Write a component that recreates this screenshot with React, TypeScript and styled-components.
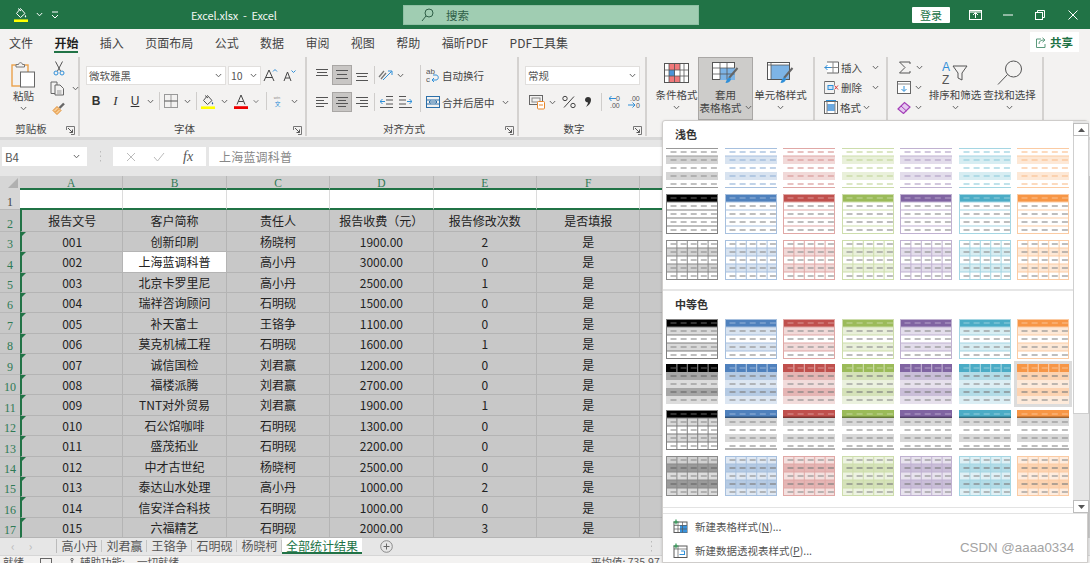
import React from "react";
import styled, { createGlobalStyle } from "styled-components";

const FONT = `"Noto Sans CJK SC", "Noto Sans", sans-serif`;
const GREEN = "#217346";

const Global = createGlobalStyle`
  html, body { margin: 0; padding: 0; background: #e6e6e6; }
  body { font-family: ${FONT}; }
  * { box-sizing: border-box; }
`;

const Page = styled.div`
  position: relative;
  width: 1090px;
  height: 563px;
  overflow: hidden;
  display: flex;
  flex-direction: column;
  background: #e6e6e6;
  color: #333;
`;

/* ---------- title bar ---------- */
const TitleBar = styled.header`
  flex: none;
  height: 29px;
  background: ${GREEN};
  display: flex;
  align-items: center;
  color: #fff;
`;
const Quick = styled.div`
  width: 191px;
  flex: none;
  display: flex;
  align-items: center;
  padding-left: 14px;
  gap: 8px;
`;
const FileName = styled.div`
  width: 212px;
  flex: none;
  font-size: 11px;
  letter-spacing: -0.1px;
  white-space: pre;
  color: #f2f7f4;
`;
const Search = styled.div`
  width: 296px;
  height: 20px;
  flex: none;
  background: #a0cdb2;
  border: 1px solid #8fc0a4;
  display: flex;
  align-items: center;
  padding-left: 17px;
  gap: 12px;
  font-size: 11.5px;
  color: #2f5f47;
`;
const SignIn = styled.div`
  flex: none;
  margin-left: 213px;
  width: 38px;
  height: 16px;
  background: #fff;
  border-radius: 1px;
  color: ${GREEN};
  font-size: 11px;
  line-height: 16px;
  text-align: center;
`;
const WinIcons = styled.div`
  flex: none;
  display: flex;
  align-items: center;
  margin-left: 9px;
`;
const WinSlot = styled.div`
  width: 32.6px;
  display: flex;
  justify-content: center;
`;

/* ---------- tabs ---------- */
const TabRow = styled.nav`
  flex: none;
  height: 28px;
  background: #f3f2f1;
  display: flex;
  align-items: center;
  padding-left: 9px;
  gap: 21.4px;
  position: relative;
`;
const Tab = styled.div<{ $on?: boolean }>`
  position: relative;
  font-size: 12px;
  height: 28px;
  line-height: 27px;
  color: ${(p) => (p.$on ? "#1f1f1f" : "#444")};
  font-weight: ${(p) => (p.$on ? 700 : 400)};
  white-space: nowrap;
  &::after {
    content: "";
    display: ${(p) => (p.$on ? "block" : "none")};
    position: absolute;
    left: 0;
    right: 0;
    top: 22px;
    height: 2px;
    background: ${GREEN};
  }
`;
const ShareButton = styled.div`
  position: absolute;
  left: 1030px;
  top: 3px;
  width: 49px;
  height: 20px;
  background: #fff;
  display: flex;
  align-items: center;
  justify-content: center;
  gap: 3px;
  font-size: 11.5px;
  font-weight: 700;
  color: ${GREEN};
`;

/* ---------- ribbon ---------- */
const Ribbon = styled.section`
  flex: none;
  height: 83px;
  background: #f3f2f1;
  border-bottom: 3px solid #d8d8d8;
  display: flex;
`;
const Group = styled.div<{ $w: number }>`
  flex: none;
  width: ${(p) => p.$w}px;
  height: 79px;
  display: flex;
  flex-direction: column;
  position: relative;
  border-right: 2px solid #d4d2d0;
`;
const Body = styled.div<{ $top?: number; $left?: number }>`
  height: 66px;
  display: flex;
  padding-top: ${(p) => p.$top ?? 0}px;
  padding-left: ${(p) => p.$left ?? 0}px;
`;
const GroupLabel = styled.div`
  height: 14px;
  line-height: 14px;
  font-size: 10.5px;
  color: #444;
  text-align: center;
  padding-right: 16px;
`;
const Launcher = styled.div`
  position: absolute;
  right: 3px;
  bottom: 1px;
  line-height: 0;
`;
const Stack = styled.div<{ $gap?: number }>`
  display: flex;
  flex-direction: column;
  gap: ${(p) => p.$gap ?? 0}px;
`;
const ToolRow = styled.div<{ $h?: number }>`
  display: flex;
  align-items: center;
  height: ${(p) => p.$h ?? 20}px;
  font-size: 10.5px;
  color: #444;
`;
const Slot = styled.div<{ $w: number; $on?: boolean }>`
  flex: none;
  width: ${(p) => p.$w}px;
  height: 20px;
  display: flex;
  align-items: center;
  justify-content: center;
  font-size: 12px;
  color: #333;
  background: ${(p) => (p.$on ? "#c8c6c4" : "transparent")};
  border: ${(p) => (p.$on ? "1px solid #a9a7a5" : "none")};
`;
const MiniSep = styled.div<{ $w: number; $tall?: boolean }>`
  flex: none;
  width: ${(p) => p.$w}px;
  height: ${(p) => (p.$tall ? 47 : 18)}px;
  position: relative;
  &::after {
    content: "";
    position: absolute;
    left: 50%;
    top: 0;
    bottom: 0;
    width: 1px;
    background: #cfcdcb;
  }
`;
const Combo = styled.div<{ $w: number }>`
  flex: none;
  width: ${(p) => p.$w}px;
  height: 19px;
  background: #fff;
  border: 1px solid #e1dfdd;
  display: flex;
  align-items: center;
  justify-content: space-between;
  padding: 0 3px 0 2px;
  font-size: 10.5px;
  color: #555;
`;
const Large = styled.div<{ $w: number; $on?: boolean; $ml?: number }>`
  flex: none;
  width: ${(p) => p.$w}px;
  height: 63px;
  margin-left: ${(p) => p.$ml ?? 0}px;
  display: flex;
  flex-direction: column;
  align-items: center;
  font-size: 10.5px;
  line-height: 13px;
  color: #444;
  white-space: nowrap;
  background: ${(p) => (p.$on ? "#cdccca" : "transparent")};
  border: ${(p) => (p.$on ? "1px solid #a9a7a5" : "1px solid transparent")};
`;
const LargeIcon = styled.div`
  height: 30px;
  flex: none;
  display: flex;
  align-items: center;
  justify-content: center;
`;
const LargeLine = styled.div`
  height: 13px;
  display: flex;
  align-items: center;
  gap: 3px;
`;
const Spaced = styled.span`
  margin-left: 2px;
  white-space: nowrap;
`;
const BoldGlyph = styled.b`
  font-family: "Liberation Sans", sans-serif;
`;
const ItalicGlyph = styled.i`
  font-family: "Liberation Serif", serif;
  font-size: 13px;
`;
const UnderGlyph = styled.u`
  font-family: "Liberation Sans", sans-serif;
`;

/* ---------- formula bar ---------- */
const FormulaRow = styled.div`
  flex: none;
  height: 36px;
  padding: 7px 0 0 2px;
  display: flex;
  background: #e6e6e6;
`;
const FormulaBox = styled.div<{ $w: number }>`
  flex: none;
  width: ${(p) => p.$w}px;
  height: 19px;
  background: #fff;
  display: flex;
  align-items: center;
  font-size: 11.5px;
  color: #555;
`;
const NameBox = styled(FormulaBox)`
  justify-content: space-between;
  padding: 0 7px 0 3px;
`;
const DotsSlot = styled.div`
  flex: none;
  width: 26px;
  height: 19px;
  display: flex;
  align-items: center;
  justify-content: center;
`;
const FxBox = styled(FormulaBox)`
  justify-content: space-around;
  padding: 0 4px;
  color: #bbb;
`;
const FxMark = styled.span`
  font-family: "Liberation Serif", serif;
  font-style: italic;
  font-size: 14px;
  color: #555;
`;
const FormulaInput = styled(FormulaBox)`
  margin-left: 3px;
  padding-left: 10px;
  font-size: 12px;
  color: #888;
  letter-spacing: 0.2px;
`;

/* ---------- sheet ---------- */
const Sheet = styled.main`
  flex: none;
  height: 362px;
  overflow: hidden;
  background: #c8c8c8;
`;
const SheetRow = styled.div<{ $h: number }>`
  display: flex;
  height: ${(p) => p.$h}px;
  width: 1200px;
`;
const Corner = styled.div`
  flex: none;
  width: 20px;
  background: #d6d6d6;
  position: relative;
  &::after {
    content: "";
    position: absolute;
    right: 2px;
    bottom: 2px;
    border-style: solid;
    border-width: 0 0 10px 10px;
    border-color: transparent transparent #b0b0b0 transparent;
  }
`;
const ColHead = styled.div`
  flex: 0 0 103.4px;
  background: #cfcfcf;
  border-right: 1px solid #b8b8b8;
  border-bottom: 2px solid ${GREEN};
  font-family: "Liberation Serif", serif;
  font-size: 11.5px;
  line-height: 14px;
  text-align: center;
  color: #2f7a55;
`;
const RowHead = styled.div<{ $plain?: boolean }>`
  flex: none;
  width: 20px;
  background: ${(p) => (p.$plain ? "#d6d6d6" : "#c8c8c8")};
  border-bottom: 1px solid #b8b8b8;
  font-family: "Liberation Serif", serif;
  font-size: 12px;
  text-align: center;
  display: flex;
  align-items: flex-end;
  justify-content: center;
  line-height: 14px;
  color: ${(p) => (p.$plain ? "#444" : "#2f7a55")};
`;
const Cell = styled.div<{ $first?: boolean; $tick?: boolean; $white?: boolean }>`
  position: relative;
  flex: 0 0 103.4px;
  display: flex;
  align-items: center;
  justify-content: center;
  font-size: 12px;
  color: #222;
  background: ${(p) => (p.$white ? "#fff" : "#c8c8c8")};
  border-right: 1px solid #b4b4b4;
  border-bottom: 1px solid #b4b4b4;
  border-left: ${(p) => (p.$first ? `2px solid ${GREEN}` : "none")};
  &::before {
    content: "";
    display: ${(p) => (p.$tick ? "block" : "none")};
    position: absolute;
    left: 0;
    top: 0;
    border-style: solid;
    border-width: 4px 4px 0 0;
    border-color: ${GREEN} transparent transparent transparent;
  }
`;
const BlankCell = styled.div`
  flex: 0 0 103.4px;
  background: #fff;
  border-right: 1px solid #dcdcdc;
  border-bottom: 2px solid ${GREEN};
`;

/* ---------- sheet tabs + status ---------- */
const TabBar = styled.div`
  flex: none;
  height: 17px;
  background: #e6e6e6;
  display: flex;
  position: relative;
`;
const Nav = styled.div`
  flex: none;
  width: 57px;
  display: flex;
  padding-left: 11px;
  gap: 14px;
  font-size: 12px;
  line-height: 14px;
  color: #bbb;
  border-right: 1px solid #bbb;
  height: 14px;
  margin-top: 1px;
`;
const SheetTab = styled.div<{ $on?: boolean }>`
  flex: none;
  width: ${(p) => (p.$on ? 80 : 45)}px;
  height: 16px;
  text-align: center;
  font-size: 12px;
  line-height: 15px;
  color: ${(p) => (p.$on ? GREEN : "#555")};
  background: ${(p) => (p.$on ? "#fff" : "transparent")};
  border-bottom: ${(p) => (p.$on ? `2px solid ${GREEN}` : "none")};
  position: relative;
  &::after {
    content: "";
    display: ${(p) => (p.$on ? "none" : "block")};
    position: absolute;
    right: 0;
    top: 2px;
    bottom: 2px;
    width: 1px;
    background: #c4c4c4;
  }
`;
const PlusSlot = styled.div`
  flex: none;
  margin-left: 18px;
  margin-top: 2px;
  line-height: 0;
`;
const GripSlot = styled.div`
  position: absolute;
  left: 650px;
  top: 3px;
  line-height: 0;
`;
const StatusBar = styled.footer`
  flex: none;
  height: 20px;
  background: #f3f2f1;
  display: flex;
  align-items: flex-start;
  font-size: 10.5px;
  line-height: 12px;
  color: #555;
  padding-left: 3px;
  border-top: 1px solid #d6d6d6;
  position: relative;
`;
const StatusItem = styled.span<{ $ml?: number }>`
  margin-left: ${(p) => p.$ml ?? 0}px;
  white-space: nowrap;
  line-height: 12px;
`;
const StatusGlyph = styled.span<{ $ml: number }>`
  margin-left: ${(p) => p.$ml}px;
  line-height: 0;
  padding-top: 2px;
`;

/* ---------- table styles menu ---------- */
const Menu = styled.aside`
  position: absolute;
  left: 662px;
  top: 120px;
  width: 426px;
  height: 443px;
  background: #fff;
  border: 1px solid #cfcdcb;
  border-radius: 3px 3px 0 0;
  box-shadow: 0 1px 3px rgba(0, 0, 0, 0.18);
  display: flex;
  flex-direction: column;
`;
const MenuTop = styled.div`
  flex: none;
  height: 393px;
  display: flex;
  border-bottom: 1px solid #e3e3e3;
`;
const GalleryPane = styled.div`
  flex: none;
  width: 410px;
  display: flex;
  flex-direction: column;
  padding-left: 3px;
`;
const SectionTitle = styled.div<{ $h: number }>`
  height: ${(p) => p.$h}px;
  padding: 0 0 2px 9px;
  display: flex;
  align-items: center;
  font-size: 11px;
  font-weight: 700;
  color: #333;
`;
const Gallery = styled.div`
  display: grid;
  grid-template-columns: repeat(7, 52px);
  column-gap: 6.53px;
  row-gap: 5.75px;
`;
const ThumbBox = styled.div<{ $hot?: boolean }>`
  width: 52px;
  height: 40px;
  line-height: 0;
  outline: ${(p) => (p.$hot ? "3px solid #dcdcdc" : "none")};
  background: ${(p) => (p.$hot ? "#dcdcdc" : "transparent")};
`;
const SectionRule = styled.div`
  height: 2px;
  margin: 9px 0 0 -3px;
  background: #e6e6e6;
`;
const GalleryEnd = styled.div`
  height: 1px;
  margin: auto 0 5px -3px;
  background: #e3e3e3;
`;
const Scroller = styled.div`
  flex: none;
  width: 16px;
  display: flex;
  flex-direction: column;
  background: #e6e6e6;
  padding-top: 2px;
`;
const ScrollBtn = styled.div`
  height: 13px;
  flex: none;
  background: #fff;
  border: 1px solid #bdbdbd;
  display: flex;
  align-items: center;
  justify-content: center;
`;
const ScrollThumb = styled.div`
  height: 278px;
  flex: none;
  background: #fff;
  border: 1px solid #cfcfcf;
  border-top: none;
`;
const ScrollTrack = styled.div`
  flex: 1;
`;
const MenuItem = styled.div`
  flex: none;
  height: 24px;
  display: flex;
  align-items: center;
  padding-left: 10px;
  gap: 7px;
  font-size: 10.5px;
  color: #555;
`;
const Mnemonic = styled.span`
  text-decoration: underline;
`;
const Watermark = styled.div`
  position: absolute;
  left: 960px;
  top: 540px;
  font-family: "Liberation Sans", sans-serif;
  font-size: 13.3px;
  line-height: 16px;
  color: #a3a3a3;
  white-space: nowrap;
`;

/* ---------- icons ---------- */
const G = "#555";
const BLUE = "#2f8fd8";
const Chev = ({ c = "#666" }: { c?: string }) => (
  <svg width="7" height="5" viewBox="0 0 7 5">
    <path d="M.8 1 3.5 3.8 6.2 1" fill="none" stroke={c} strokeWidth="1" />
  </svg>
);
const Lines = ({ rows }: { rows: [number, number, number][] }) => (
  <svg width="14" height="14" viewBox="0 0 14 14">
    {rows.map(([x, y, w], i) => (
      <rect key={i} x={x} y={y} width={w} height="1" fill={G} />
    ))}
  </svg>
);
const Launch = () => (
  <svg width="9" height="9" viewBox="0 0 9 9">
    <path d="M.5 4V.5H8.5V8.5H5" fill="none" stroke="#777" />
    <path d="M2 2 6.5 6.5M6.5 3.5V6.5H3.5" fill="none" stroke="#555" />
  </svg>
);
const Bucket = ({ w = "#fff", bar = "#ffff00", bx = 14 }: { w?: string; bar?: string; bx?: number }) => (
  <svg width={bx} height="15" viewBox="0 0 14 15">
    <path d="M6.5 1.5 11 6.5 6.5 10.5 2.5 6.5Z" fill="none" stroke={w} />
    <path d="M4 1.5 7 4" stroke={w} />
    <path d="M11.5 8c.9 1.2 1 2.2 0 2.4-1-.2-.9-1.2 0-2.4Z" fill={w === "#fff" ? "#fff" : "#2b579a"} />
    <rect x="0" y="12.4" width="14" height="2.6" fill={bar} />
  </svg>
);
const Paste = () => (
  <svg width="25" height="27" viewBox="0 0 25 27">
    <rect x="1" y="4" width="16" height="21" fill="none" stroke="#eaa24b" strokeWidth="1.4" />
    <path d="M5 6V3.5H7.5C8 1 11 1 11.5 3.5H13.5V6Z" fill="#f3f2f1" stroke="#777" />
    <rect x="9.5" y="11" width="14" height="15" fill="#fff" stroke="#666" />
  </svg>
);
const Scissors = () => (
  <svg width="12" height="15" viewBox="0 0 12 15">
    <path d="M2.5 .5 7.5 10M9.5 .5 4.5 10" fill="none" stroke="#555" />
    <circle cx="3" cy="12" r="2" fill="none" stroke={BLUE} />
    <circle cx="9" cy="12" r="2" fill="none" stroke={BLUE} />
  </svg>
);
const CopyIcon = () => (
  <svg width="15" height="15" viewBox="0 0 15 15">
    <path d="M1 1H7V12.5H1Z" fill="none" stroke="#666" />
    <path d="M5 4H10L13.5 7.5V14H5Z" fill="#f3f2f1" stroke="#666" />
    <path d="M7 10H11.5M7 12H11.5" stroke="#999" />
  </svg>
);
const Brush = () => (
  <svg width="14" height="14" viewBox="0 0 14 14">
    <path d="M1 9.5 5 5.5 9 9.5 5 13.5Z" fill="#f7c98f" stroke="#e08a2b" />
    <path d="M3.5 11 6.5 8" stroke="#e08a2b" />
    <path d="M7.5 7 12 2.5" stroke="#666" strokeWidth="2.4" />
  </svg>
);
const BorderIcon = () => (
  <svg width="14" height="14" viewBox="0 0 14 14">
    <rect x=".5" y=".5" width="13" height="13" fill="none" stroke="#999" />
    <path d="M7 .5V13.5" stroke="#999" />
    <path d="M.5 7H13.5" stroke="#555" />
  </svg>
);
const FontColor = () => (
  <svg width="14" height="15" viewBox="0 0 14 15">
    <path d="M3 10.5 7 1l4 9.5M4.4 7.5h5.2" fill="none" stroke="#444" />
    <rect x="0" y="12.2" width="14" height="2.8" fill="#ee0000" />
  </svg>
);
const Orient = () => (
  <svg width="16" height="15" viewBox="0 0 16 15">
    <path d="M1 9 6 3M3 11l5-6" stroke="#777" fill="none" strokeWidth="1.3" />
    <path d="M5 12 13.5 3.5" stroke={BLUE} />
    <path d="M10 3H14V7" stroke={BLUE} fill="none" />
  </svg>
);
const Indent = ({ flip }: { flip?: boolean }) => (
  <svg width="13" height="12" viewBox="0 0 13 12">
    <g transform={flip ? "matrix(-1 0 0 1 13 0)" : undefined}>
      <path d="M6 .5H13M6 4H13M6 8H13M0 11.5H13" stroke={G} />
      <path d="M0 5.5H5M2.5 3 0 5.5 2.5 8" stroke={BLUE} fill="none" />
    </g>
  </svg>
);
const WrapIcon = () => (
  <svg width="14" height="16" viewBox="0 0 14 16">
    <text x="0" y="7" fontSize="8" fill="#555" fontFamily="Liberation Sans">ab</text>
    <text x="0" y="15" fontSize="8" fill="#555" fontFamily="Liberation Sans">c</text>
    <path d="M6 13h4c3 0 3-5 0-5H7M8 11l-2 2 2 2" stroke={BLUE} fill="none" />
  </svg>
);
const MergeIcon = () => (
  <svg width="14" height="14" viewBox="0 0 14 14">
    <rect x=".5" y="1.5" width="13" height="11" fill="none" stroke="#2b6fa8" />
    <path d="M.5 5H13.5M.5 9H13.5" stroke="#2b6fa8" />
    <rect x="3" y="6" width="8" height="2" fill="#f3f2f1" />
    <path d="M3 7h8M4.5 5.5 3 7l1.5 1.5M9.5 5.5 11 7 9.5 8.5" stroke="#2b6fa8" fill="none" />
  </svg>
);
const Accounting = () => (
  <svg width="17" height="16" viewBox="0 0 17 16">
    <rect x=".5" y="1.5" width="13" height="9" fill="none" stroke="#666" />
    <rect x="3" y="4" width="8" height="4" fill="none" stroke="#888" />
    <rect x="8.5" y="7.5" width="7" height="7.5" rx="1" fill="#fff" stroke="#e8862a" />
    <path d="M10 11H14" stroke="#e8862a" />
  </svg>
);
const Decimal = ({ more }: { more?: boolean }) => (
  <svg width="15" height="14" viewBox="0 0 15 14">
    <text x={more ? 2 : 7} y="6" fontSize="7" fill="#555" fontFamily="Liberation Sans">{more ? ".00" : "0"}</text>
    <text x={more ? 8 : 1} y="13" fontSize="7" fill="#555" fontFamily="Liberation Sans">{more ? "0" : ".00"}</text>
    {more ? (
      <path d="M0 10H7M4.5 7.5 7 10 4.5 12.5" stroke={BLUE} fill="none" />
    ) : (
      <path d="M7 3.5H0M2.5 1 0 3.5 2.5 6" stroke={BLUE} fill="none" />
    )}
  </svg>
);
const CondFormat = () => (
  <svg width="25" height="20" viewBox="0 0 25 20">
    <rect x=".5" y=".5" width="24" height="19" fill="#fff" stroke="#555" />
    <rect x="5" y="1" width="11" height="6" fill="#f0787a" />
    <rect x="5" y="7" width="6" height="6" fill="#4a94d8" />
    <rect x="5" y="13" width="11" height="6" fill="#f0787a" />
    <path d="M5 .5V19.5M10.5 .5V19.5M16 .5V19.5M20 .5V19.5M.5 7H24.5M.5 13H24.5" stroke="#555" strokeWidth=".8" fill="none" />
  </svg>
);
const TableFmt = () => (
  <svg width="27" height="23" viewBox="0 0 27 23">
    <rect x=".5" y=".5" width="22" height="17" fill="#fff" stroke="#555" />
    <rect x="8" y="6" width="15" height="12" fill="#7db4e6" />
    <path d="M8 .5V17.5M15 .5V17.5M.5 6H22.5M.5 12H22.5" stroke="#555" strokeWidth=".8" fill="none" />
    <path d="M17 16 25.5 6" stroke="#666" strokeWidth="2" />
    <path d="M13.5 21c1-3 2-5 4-5.500l1.500 1.500c-.5 2.500-2.500 4-5.500 4Z" fill="#2f8fd8" />
  </svg>
);
const CellFmt = () => (
  <svg width="27" height="23" viewBox="0 0 27 23">
    <rect x=".5" y=".5" width="22" height="17" fill="#fff" stroke="#555" />
    <rect x="4" y="3" width="18" height="14" fill="#7db4e6" />
    <path d="M4 .5V17.5M.5 3H22.5" stroke="#555" strokeWidth=".8" fill="none" />
    <path d="M17 16 25.5 6" stroke="#666" strokeWidth="2" />
    <path d="M13.5 21c1-3 2-5 4-5.500l1.500 1.500c-.5 2.500-2.500 4-5.500 4Z" fill="#2f8fd8" />
  </svg>
);
const InsertIcon = () => (
  <svg width="15" height="13" viewBox="0 0 15 13">
    <path d="M3 1H14.5V12H3" fill="#fff" stroke="#666" />
    <path d="M9 1V12M.5 6.5H14.5" stroke="#888" />
    <path d="M1 6.5H7M3.5 4 1 6.5 3.5 9" stroke={BLUE} fill="none" />
  </svg>
);
const DeleteIcon = () => (
  <svg width="15" height="13" viewBox="0 0 15 13">
    <path d="M.5 .5H10.5M.5 12.5H10.5" stroke="#666" />
    <rect x="4" y="4.5" width="5" height="4" fill="#cfe2f5" stroke={BLUE} />
    <path d="M10.5 4.5 14 8.5M14 4.5 10.5 8.5" stroke="#d83b3b" />
    <path d="M.5 .5V12.5M10.5 .5V4M10.5 9V12.5" stroke="#888" />
  </svg>
);
const FormatIcon = () => (
  <svg width="14" height="14" viewBox="0 0 14 14">
    <rect x=".5" y="1.5" width="13" height="12" fill="#fff" stroke="#666" />
    <rect x="3" y="4" width="8" height="7" fill="#6aa9e2" />
    <path d="M3 1.5V13.5M11 1.5V13.5" stroke="#888" />
    <path d="M2 .5H12" stroke={BLUE} />
  </svg>
);
const SigmaIcon = () => (
  <svg width="13" height="13" viewBox="0 0 13 13">
    <path d="M12 3V1H1.5L7 6.5 1.5 12H12V10" fill="none" stroke="#555" />
  </svg>
);
const FillIcon = () => (
  <svg width="14" height="13" viewBox="0 0 14 13">
    <rect x=".5" y=".5" width="13" height="12" fill="#fff" stroke="#666" />
    <path d="M.5 3H13.5" stroke="#888" />
    <path d="M7 5V10M4.5 8 7 10.5 9.5 8" stroke={BLUE} fill="none" />
  </svg>
);
const Eraser = () => (
  <svg width="14" height="13" viewBox="0 0 14 13">
    <path d="M1 8 7.5 1.5 13 6 6.5 12.5Z" fill="#e5c8f0" stroke="#a43fb8" strokeWidth="1.2" />
    <path d="M4 5 9.5 10" stroke="#a43fb8" strokeWidth="1" />
  </svg>
);
const SortIcon = () => (
  <svg width="26" height="26" viewBox="0 0 26 26">
    <text x="0" y="11" fontSize="12" fill={BLUE} fontFamily="Liberation Sans">A</text>
    <text x="0" y="24" fontSize="12" fill="#555" fontFamily="Liberation Sans">Z</text>
    <path d="M11 6H25L20 13V20L16 18V13Z" fill="none" stroke="#555" />
  </svg>
);
const FindIcon = () => (
  <svg width="26" height="26" viewBox="0 0 26 26">
    <circle cx="16.5" cy="9" r="8" fill="none" stroke="#555" />
    <path d="M10.5 14.5 1 24.5" stroke="#555" />
  </svg>
);
const MagIcon = () => (
  <svg width="13" height="14" viewBox="0 0 13 14">
    <circle cx="8" cy="5" r="4" fill="none" stroke="#2f5f47" />
    <path d="M5 8 1 13" stroke="#2f5f47" />
  </svg>
);
const ShareIcon = () => (
  <svg width="11" height="11" viewBox="0 0 11 11">
    <path d="M5 2H.5V10.5H9V7" fill="none" stroke="#5b9a7c" />
    <path d="M3 7C3 4 5 3 8 3M6.5 .8 9 3 6.5 5.2" fill="none" stroke="#5b9a7c" />
  </svg>
);
const WinBox = () => (
  <svg width="13" height="10" viewBox="0 0 13 10">
    <rect x=".5" y=".5" width="12" height="9" fill="none" stroke="#fff" />
    <path d="M6.5 8V3M4 5 6.5 2.5 9 5" fill="none" stroke="#fff" />
    <rect x="1" y="1" width="11" height="2" fill="#fff" opacity=".6" />
  </svg>
);
const PlusCircle = () => (
  <svg width="13" height="13" viewBox="0 0 13 13">
    <circle cx="6.5" cy="6.5" r="5.8" fill="none" stroke="#8a8a8a" />
    <path d="M3.5 6.5H9.5M6.5 3.5V9.5" stroke="#666" />
  </svg>
);
const Grip = () => (
  <svg width="3" height="11" viewBox="0 0 3 11">
    <path d="M1.5 0V1.500M1.5 4.500V6M1.5 9V10.500" stroke="#bbb" />
  </svg>
);
const A11y = () => (
  <svg width="10" height="10" viewBox="0 0 10 10">
    <circle cx="4" cy="1.5" r="1.2" fill="none" stroke="#666" />
    <path d="M4 3V6.500H7L8.500 9.500M1.500 6C1 8 2.500 9.500 4 9.500" fill="none" stroke="#666" />
  </svg>
);
const NormalView = () => (
  <svg width="12" height="9" viewBox="0 0 12 9">
    <rect x=".5" y=".5" width="11" height="8" fill="none" stroke="#666" />
  </svg>
);
const NewTable = () => (
  <svg width="15" height="14" viewBox="0 0 15 14">
    <rect x="1" y="3" width="13" height="10.500" fill="#fff" stroke="#5a5a5a" />
    <rect x="7" y="6" width="7" height="7.500" fill="#3a93dc" />
    <path d="M5 3V13.500M9.500 3V13.500M1 6.500H14M1 10H14" stroke="#5a5a5a" strokeWidth=".7" />
    <path d="M3 .5V5.500M.5 3H5.500" stroke="#2c9a53" strokeWidth="1.2" />
  </svg>
);
const NewPivot = () => (
  <svg width="15" height="15" viewBox="0 0 15 15">
    <rect x="1" y="3" width="13" height="11.500" fill="#fff" stroke="#5a5a5a" />
    <path d="M1 6H14M5 3V14.500" stroke="#5a5a5a" strokeWidth=".7" />
    <path d="M8 8H11.500V12M6.500 11.500H11.500" fill="none" stroke={BLUE} />
    <path d="M3 .5V5.500M.5 3H5.500" stroke="#2c9a53" strokeWidth="1.2" />
  </svg>
);

/* ---------- gallery thumbnails ---------- */
const mix = (hex: string, to: string, a: number) => {
  const n = (s: string, i: number) => parseInt(s.slice(1 + i * 2, 3 + i * 2), 16);
  const ch = [0, 1, 2].map((i) => Math.round(n(hex, i) * (1 - a) + n(to, i) * a));
  return `rgb(${ch.join(",")})`;
};
type Variant = "l1" | "l2" | "l3" | "m1" | "m2" | "m3" | "m4";
const BASES = ["#000000", "#4f81bd", "#c0504d", "#9bbb59", "#8064a2", "#4bacc6", "#f79646"];

const Thumb = ({ v, c }: { v: Variant; c: string }) => {
  const t = (a: number) => mix(c, "#ffffff", a);
  const k = c === "#000000";
  const rows = [0, 1, 2, 3, 4];
  const h = 8;
  const headFill = v === "l2" || v === "m1" || v === "m2" || v === "m3";
  const fill = (r: number) => {
    if (r === 0) return headFill ? c : v === "m4" ? t(0.82) : "#fff";
    if (v === "l1" || v === "l3") return r % 2 ? (k ? "#d4d4d4" : t(0.78)) : "#fff";
    if (v === "l2") return "#fff";
    if (v === "m1") return r % 2 ? (k ? "#d9d9d9" : t(0.78)) : "#fff";
    if (v === "m2") return r % 2 ? (k ? "#a6a6a6" : t(0.58)) : k ? "#dcdcdc" : t(0.8);
    if (v === "m3") return r % 2 ? "#d9d9d9" : "#fff";
    return r % 2 ? (k ? "#9a9a9a" : t(0.58)) : k ? "#dcdcdc" : t(0.82);
  };
  const edge = k ? (v === "l1" ? "#999" : v === "m1" || v === "l2" || v === "m3" ? "#7f7f7f" : "#8a8a8a") : t(0.5);
  const dash = (r: number) => {
    if (r === 0 && headFill) return k ? "#555" : t(0.35);
    if (v === "l1") return k ? "#999" : t(0.42);
    if ((v === "m2" || v === "m4") && r % 2) return k ? "#6a6a6a" : "#808080";
    return "#949494";
  };
  const grid = v === "l3" || v === "m4" || (v === "m3" && k);
  const frame = v === "l2" || v === "l3" || v === "m1" || v === "m4" || (v === "m3" && k);
  const rules = v === "l2" || v === "l3" || v === "m1" || (v === "m3" && k) || v === "m4";
  return (
    <svg width="52" height="40" viewBox="0 0 52 40">
      {rows.map((r) => (
        <rect key={r} x="0" y={r * h} width="52" height={h} fill={fill(r)} />
      ))}
      {v === "m2" && [10.4, 20.8, 31.2, 41.6].map((x) => (
        <rect key={x} x={x} y="0" width="1" height="8" fill="#fff" opacity=".6" />
      ))}
      {grid && [10.4, 20.8, 31.2, 41.6].map((x) => (
        <rect key={x} x={x} y={v === "m3" ? 8 : 0} width="1" height={v === "m3" ? 32 : 40} fill={edge} />
      ))}
      {rules && [8, 16, 24, 32].map((y) => (
        <rect key={y} x="0" y={y - 0.5} width="52" height="1" fill={edge} />
      ))}
      {frame && <rect x=".5" y=".5" width="51" height="39" fill="none" stroke={edge} />}
      {v === "l1" && <rect x="0" y="0" width="52" height="1" fill={edge} />}
      {v === "l1" && <rect x="0" y="7.5" width="52" height="1" fill={edge} />}
      {v === "l1" && <rect x="0" y="39" width="52" height="1" fill={edge} />}
      {v === "m3" && !k && <rect x="0" y="6.5" width="52" height="1.5" fill={mix(c, "#000000", 0.35)} />}
      {v === "m3" && !k && <rect x="0" y="38" width="52" height="2" fill="#b4b4b4" />}
      {rows.map((r) =>
        rows.map((i) => (
          <rect key={`${r}${i}`} x={4.5 + i * 10.1} y={r * h + 3.4} width="6" height="1.2" fill={dash(r)} />
        ))
      )}
    </svg>
  );
};

const ThumbGrid = ({ kinds, hot }: { kinds: Variant[]; hot?: [number, number] }) => (
  <Gallery>
    {kinds.map((v, r) =>
      BASES.map((c, i) => (
        <ThumbBox key={`${v}${c}`} $hot={!!hot && hot[0] === r && hot[1] === i}>
          <Thumb v={v} c={c} />
        </ThumbBox>
      ))
    )}
  </Gallery>
);

/* ---------- data ---------- */
const TABS = ["文件", "开始", "插入", "页面布局", "公式", "数据", "审阅", "视图", "帮助", "福昕PDF", "PDF工具集"];
const COLS = ["A", "B", "C", "D", "E", "F", "G", "H", "I", "J"];
const DATA: [string, string, string, string, string][] = [
  ["001", "创新印刷", "杨晓柯", "1900.00", "2"],
  ["002", "上海蓝调科普", "高小丹", "3000.00", "0"],
  ["003", "北京卡罗里尼", "高小丹", "2500.00", "1"],
  ["004", "瑞祥咨询顾问", "石明砚", "1500.00", "0"],
  ["005", "补天富士", "王铬争", "1100.00", "0"],
  ["006", "莫克机械工程", "石明砚", "1600.00", "1"],
  ["007", "诚信国检", "刘君赢", "1200.00", "0"],
  ["008", "福楼派腾", "刘君赢", "2700.00", "0"],
  ["009", "TNT对外贸易", "刘君赢", "1900.00", "1"],
  ["010", "石公馆咖啡", "石明砚", "1300.00", "0"],
  ["011", "盛茂拓业", "石明砚", "2200.00", "0"],
  ["012", "中才古世纪", "杨晓柯", "2500.00", "0"],
  ["013", "泰达山水处理", "高小丹", "1000.00", "2"],
  ["014", "信安洋合科技", "石明砚", "1000.00", "0"],
  ["015", "六福精艺", "石明砚", "2000.00", "3"],
];
const HEAD = ["报告文号", "客户简称", "责任人", "报告收费（元）", "报告修改次数", "是否填报"];
const SHEETS = ["高小丹", "刘君赢", "王铬争", "石明砚", "杨晓柯"];

export default function App() {
  return (
    <Page>
      <Global />
      <TitleBar>
        <Quick>
          <Bucket />
          <Chev c="#fff" />
          <svg width="8" height="8" viewBox="0 0 8 8">
            <path d="M1 1H7M1 4 4 7 7 4" fill="none" stroke="#fff" />
          </svg>
        </Quick>
        <FileName>Excel.xlsx  -  Excel</FileName>
        <Search>
          <MagIcon />
          <span>搜索</span>
        </Search>
        <SignIn>登录</SignIn>
        <WinIcons>
          <WinSlot><WinBox /></WinSlot>
          <WinSlot>
            <svg width="10" height="2" viewBox="0 0 10 2"><path d="M0 1H10" stroke="#fff" /></svg>
          </WinSlot>
          <WinSlot>
            <svg width="10" height="10" viewBox="0 0 10 10">
              <path d="M2.5 2.5V.5H9.5V7.5H7.5" fill="none" stroke="#fff" />
              <rect x=".5" y="2.5" width="7" height="7" fill="none" stroke="#fff" />
            </svg>
          </WinSlot>
          <WinSlot>
            <svg width="10" height="10" viewBox="0 0 10 10"><path d="M.5 .5 9.5 9.5M9.5 .5 .5 9.5" stroke="#fff" /></svg>
          </WinSlot>
        </WinIcons>
      </TitleBar>

      <TabRow>
        {TABS.map((t) => (
          <Tab key={t} $on={t === "开始"}>{t}</Tab>
        ))}
        <ShareButton><ShareIcon />共享</ShareButton>
      </TabRow>

      <Ribbon>
        <Group $w={80}>
          <Body $top={1}>
            <Large $w={47}>
              <LargeIcon><Paste /></LargeIcon>
              <LargeLine>粘贴</LargeLine>
              <LargeLine><Chev /></LargeLine>
            </Large>
            <Stack>
              <ToolRow><Slot $w={6} /><Scissors /></ToolRow>
              <ToolRow><Slot $w={3} /><CopyIcon /><Slot $w={7} /><Chev /></ToolRow>
              <ToolRow><Slot $w={5} /><Brush /></ToolRow>
            </Stack>
          </Body>
          <GroupLabel>剪贴板</GroupLabel>
          <Launcher><Launch /></Launcher>
        </Group>

        <Group $w={227}>
          <Body $top={8} $left={6}>
            <Stack $gap={6}>
              <ToolRow>
                <Combo $w={140}><span>微软雅黑</span><Chev /></Combo>
                <Slot $w={2} />
                <Combo $w={33}><span>10</span><Chev /></Combo>
                <Slot $w={18}><svg width="15" height="14" viewBox="0 0 15 14"><path d="M1 13 6 2l5 11M3 9.5h6" fill="none" stroke="#444" /><path d="M10 3.5 12 1.500 14 3.500" fill="none" stroke={BLUE} /></svg></Slot>
                <Slot $w={3} />
                <Slot $w={15}><svg width="13" height="13" viewBox="0 0 13 13"><path d="M1 12 4.5 3 8 12M2.2 9h4.600" fill="none" stroke="#444" /><path d="M8.5 1.500 10.500 3.500 12.500 1.500" fill="none" stroke={BLUE} /></svg></Slot>
              </ToolRow>
              <ToolRow>
                <Slot $w={20}><BoldGlyph>B</BoldGlyph></Slot>
                <Slot $w={19}><ItalicGlyph>I</ItalicGlyph></Slot>
                <Slot $w={20}><UnderGlyph>U</UnderGlyph></Slot>
                <Slot $w={10}><Chev /></Slot>
                <MiniSep $w={8} />
                <Slot $w={16}><BorderIcon /></Slot>
                <Slot $w={16}><Chev /></Slot>
                <MiniSep $w={2} />
                <Slot $w={22}><Bucket w="#555" /></Slot>
                <Slot $w={10}><Chev /></Slot>
                <Slot $w={24}><FontColor /></Slot>
                <Slot $w={6}><Chev /></Slot>
                <MiniSep $w={14} />
                <Slot $w={10}>
                  <svg width="14" height="17" viewBox="0 0 14 17">
                    <text x="1" y="5" fontSize="5" fill="#888" fontFamily="Liberation Sans">wén</text>
                    <text x="2.5" y="15" fontSize="8" fill={BLUE} fontFamily="Noto Sans CJK SC">文</text>
                  </svg>
                </Slot>
                <Slot $w={22}><Chev /></Slot>
              </ToolRow>
            </Stack>
          </Body>
          <GroupLabel>字体</GroupLabel>
          <Launcher><Launch /></Launcher>
        </Group>

        <Group $w={212}>
          <Body $top={8} $left={5}>
            <Stack $gap={7}>
              <ToolRow>
                <Slot $w={20}><Lines rows={[[1, 1, 12], [2, 4, 10], [1, 7, 12]]} /></Slot>
                <Slot $w={20} $on><Lines rows={[[1, 2, 12], [2, 6, 10], [1, 10, 12]]} /></Slot>
                <Slot $w={20}><Lines rows={[[1, 5, 12], [2, 8, 10], [1, 12, 12]]} /></Slot>
                <MiniSep $w={4} />
                <Slot $w={20}><Orient /></Slot>
                <Slot $w={8}><Chev /></Slot>
              </ToolRow>
              <ToolRow>
                <Slot $w={20}><Lines rows={[[1, 2, 12], [1, 5, 8], [1, 8, 12], [1, 11, 8]]} /></Slot>
                <Slot $w={20} $on><Lines rows={[[1, 2, 12], [3, 5, 8], [1, 8, 12], [3, 11, 8]]} /></Slot>
                <Slot $w={20}><Lines rows={[[1, 2, 12], [5, 5, 8], [1, 8, 12], [5, 11, 8]]} /></Slot>
                <MiniSep $w={4} />
                <Slot $w={20}><Indent /></Slot>
                <Slot $w={18}><Indent flip /></Slot>
              </ToolRow>
            </Stack>
            <MiniSep $w={12} $tall />
            <Stack $gap={7}>
              <ToolRow><WrapIcon /><Spaced>自动换行</Spaced></ToolRow>
              <ToolRow><MergeIcon /><Spaced>合并后居中</Spaced><Slot $w={22}><Chev /></Slot></ToolRow>
            </Stack>
          </Body>
          <GroupLabel>对齐方式</GroupLabel>
          <Launcher><Launch /></Launcher>
        </Group>

        <Group $w={128}>
          <Body $top={8} $left={6}>
            <Stack $gap={7}>
              <ToolRow><Combo $w={115}><span>常规</span><Chev /></Combo></ToolRow>
              <ToolRow>
                <Slot $w={3} />
                <Slot $w={19}><Accounting /></Slot>
                <Slot $w={10}><Chev /></Slot>
                <Slot $w={24}>
                  <svg width="14" height="14" viewBox="0 0 14 14">
                    <circle cx="3" cy="3.5" r="2.2" fill="none" stroke="#444" />
                    <circle cx="11" cy="10.5" r="2.2" fill="none" stroke="#444" />
                    <path d="M12 1.5 2 12.5" stroke="#444" />
                  </svg>
                </Slot>
                <Slot $w={14}>
                  <svg width="6" height="10" viewBox="0 0 6 10">
                    <path d="M3 0c2 0 3 1 3 3 0 3-2 5-5 7 1-2 2-3 2-4.500C1.500 5.500 0 4.500 0 3c0-2 1.500-3 3-3Z" fill="#333" />
                  </svg>
                </Slot>
                <MiniSep $w={12} />
                <Slot $w={18}><Decimal /></Slot>
                <Slot $w={20}><Decimal more /></Slot>
              </ToolRow>
            </Stack>
          </Body>
          <GroupLabel>数字</GroupLabel>
          <Launcher><Launch /></Launcher>
        </Group>

        <Group $w={168}>
          <Body $left={8}>
            <Large $w={43}>
              <LargeIcon><CondFormat /></LargeIcon>
              <LargeLine>条件格式</LargeLine>
              <LargeLine><Chev /></LargeLine>
            </Large>
            <Large $w={55} $on>
              <LargeIcon><TableFmt /></LargeIcon>
              <LargeLine>套用</LargeLine>
              <LargeLine>表格格式<Chev /></LargeLine>
            </Large>
            <Large $w={55}>
              <LargeIcon><CellFmt /></LargeIcon>
              <LargeLine>单元格样式</LargeLine>
              <LargeLine><Chev /></LargeLine>
            </Large>
          </Body>
        </Group>

        <Group $w={73}>
          <Body $left={9}>
            <Stack>
              <ToolRow><InsertIcon /><Spaced>插入</Spaced><Slot $w={27}><Chev /></Slot></ToolRow>
              <ToolRow><DeleteIcon /><Spaced>删除</Spaced><Slot $w={27}><Chev /></Slot></ToolRow>
              <ToolRow><FormatIcon /><Spaced>格式</Spaced><Slot $w={11}><Chev /></Slot></ToolRow>
            </Stack>
          </Body>
        </Group>

        <Group $w={156}>
          <Body $left={8}>
            <Stack>
              <ToolRow><Slot $w={16}><SigmaIcon /></Slot><Slot $w={15}><Chev /></Slot></ToolRow>
              <ToolRow><Slot $w={16}><FillIcon /></Slot><Slot $w={12}><Chev /></Slot></ToolRow>
              <ToolRow><Slot $w={16}><Eraser /></Slot><Slot $w={12}><Chev /></Slot></ToolRow>
            </Stack>
            <Large $w={54} $ml={1}>
              <LargeIcon><SortIcon /></LargeIcon>
              <LargeLine>排序和筛选</LargeLine>
              <LargeLine><Chev /></LargeLine>
            </Large>
            <Large $w={55}>
              <LargeIcon><FindIcon /></LargeIcon>
              <LargeLine>查找和选择</LargeLine>
              <LargeLine><Chev /></LargeLine>
            </Large>
          </Body>
        </Group>
      </Ribbon>

      <FormulaRow>
        <NameBox $w={85}><span>B4</span><Chev /></NameBox>
        <DotsSlot><Grip /></DotsSlot>
        <FxBox $w={93}>
          <svg width="10" height="10" viewBox="0 0 10 10"><path d="M1 1 9 9M9 1 1 9" stroke="#bbb" /></svg>
          <svg width="12" height="10" viewBox="0 0 12 10"><path d="M1 5 4.5 9 11 1" stroke="#bbb" fill="none" /></svg>
          <FxMark>fx</FxMark>
        </FxBox>
        <FormulaInput $w={460}>上海蓝调科普</FormulaInput>
      </FormulaRow>

      <Sheet>
        <SheetRow $h={14}>
          <Corner />
          {COLS.map((c) => <ColHead key={c}>{c}</ColHead>)}
        </SheetRow>
        <SheetRow $h={20}>
          <RowHead $plain>1</RowHead>
          {COLS.map((c) => <BlankCell key={c} />)}
        </SheetRow>
        <SheetRow $h={21.7}>
          <RowHead>2</RowHead>
          {HEAD.map((h, i) => <Cell key={h} $first={i === 0}>{h}</Cell>)}
          <Cell />
          <Cell />
        </SheetRow>
        {DATA.map((d, r) => (
          <SheetRow $h={20.45} key={d[0]}>
            <RowHead>{r + 3}</RowHead>
            <Cell $first $tick>{d[0]}</Cell>
            <Cell $white={r === 1}>{d[1]}</Cell>
            <Cell>{d[2]}</Cell>
            <Cell>{d[3]}</Cell>
            <Cell>{d[4]}</Cell>
            <Cell>是</Cell>
            <Cell />
            <Cell />
          </SheetRow>
        ))}
      </Sheet>

      <TabBar>
        <Nav><span>‹</span><span>›</span></Nav>
        {SHEETS.map((s) => <SheetTab key={s}>{s}</SheetTab>)}
        <SheetTab $on>全部统计结果</SheetTab>
        <PlusSlot><PlusCircle /></PlusSlot>
        <GripSlot><Grip /></GripSlot>
      </TabBar>
      <StatusBar>
        <StatusItem>就绪</StatusItem>
        <StatusGlyph $ml={16}><NormalView /></StatusGlyph>
        <StatusGlyph $ml={16}><A11y /></StatusGlyph>
        <StatusItem $ml={2}>辅助功能:</StatusItem>
        <StatusItem $ml={12}>一切就绪</StatusItem>
        <StatusItem $ml={412}>平均值: 735.97</StatusItem>
      </StatusBar>

      <Menu>
        <MenuTop>
          <GalleryPane>
            <SectionTitle $h={27}>浅色</SectionTitle>
            <ThumbGrid kinds={["l1", "l2", "l3"]} />
            <SectionRule />
            <SectionTitle $h={28}>中等色</SectionTitle>
            <ThumbGrid kinds={["m1", "m2", "m3", "m4"]} hot={[1, 6]} />
            <GalleryEnd />
          </GalleryPane>
          <Scroller>
            <ScrollBtn>
              <svg width="7" height="4" viewBox="0 0 7 4"><path d="M0 4 3.5 0 7 4Z" fill="#555" /></svg>
            </ScrollBtn>
            <ScrollThumb />
            <ScrollTrack />
            <ScrollBtn>
              <svg width="7" height="4" viewBox="0 0 7 4"><path d="M0 0 3.5 4 7 0Z" fill="#555" /></svg>
            </ScrollBtn>
          </Scroller>
        </MenuTop>
        <MenuItem><NewTable /><span>新建表格样式(<Mnemonic>N</Mnemonic>)...</span></MenuItem>
        <MenuItem><NewPivot /><span>新建数据透视表样式(<Mnemonic>P</Mnemonic>)...</span></MenuItem>
      </Menu>
      <Watermark>CSDN @aaaa0334</Watermark>
    </Page>
  );
}
